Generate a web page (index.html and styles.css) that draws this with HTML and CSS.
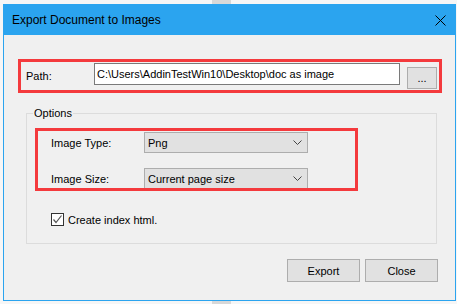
FILE: index.html
```html
<!DOCTYPE html>
<html lang="en">
<head>
  <meta charset="UTF-8">
  <title>Export Document to Images</title>
  <link rel="stylesheet" href="styles.css">
</head>
<body>
  <div class="desktop">
    <div class="window">
      <div class="titlebar">
        <span class="title">Export Document to Images</span>
        <svg class="close-icon" width="11" height="11" viewBox="0 0 11 11">
          <path d="M0.5 0.5 L10.5 10.5 M10.5 0.5 L0.5 10.5" stroke="#000" stroke-width="1" fill="none"/>
        </svg>
      </div>

      <div class="dialog-body">
        <div class="mark path-row">
          <span class="path-label">Path:</span>
          <div class="textbox">C:\Users\AddinTestWin10\Desktop\doc as image</div>
          <button class="btn browse-btn">...</button>
        </div>

        <fieldset class="options">
          <legend>Options</legend>
          <div class="mark combo-rows">
            <div class="combo-row">
              <span class="combo-label">Image Type:</span>
              <div class="combo">
                <span>Png</span>
                <svg width="9" height="5" viewBox="0 0 9 5"><path d="M0.5 0.5 L4.5 4.5 L8.5 0.5" stroke="#444" fill="none"/></svg>
              </div>
            </div>
            <div class="combo-row">
              <span class="combo-label">Image Size:</span>
              <div class="combo">
                <span>Current page size</span>
                <svg width="9" height="5" viewBox="0 0 9 5"><path d="M0.5 0.5 L4.5 4.5 L8.5 0.5" stroke="#444" fill="none"/></svg>
              </div>
            </div>
          </div>
          <label class="check-row">
            <span class="checkbox">
              <svg width="11" height="11" viewBox="0 0 11 11"><path d="M1.5 5.5 L4 8.5 L9.5 1.5" stroke="#555" stroke-width="1.2" fill="none"/></svg>
            </span>
            Create index html.
          </label>
        </fieldset>

        <div class="actions">
          <button class="btn action-btn">Export</button>
          <button class="btn action-btn">Close</button>
        </div>
      </div>
    </div>
  </div>
</body>
</html>
```

FILE: styles.css
```css
body {
  margin: 0;
  background: #f6f6f6;
  font-family: "Liberation Sans", Arial, sans-serif;
  font-size: 11px;
  color: #000;
}
.desktop {
  width: 457px;
  height: 304px;
  padding: 4px 0 0 3px;
  box-sizing: border-box;
  overflow: hidden;
  background: linear-gradient(to right, transparent 212px, #d8d8d8 212px, #d8d8d8 231px, transparent 231px);
}
.window {
  width: 453px;
  height: 297px;
  box-sizing: border-box;
  border: 1px solid #2ba4ef;
  background: #f0f0f0;
}
.titlebar {
  height: 30px;
  background: #2ba4ef;
  display: flex;
  align-items: center;
  justify-content: space-between;
  padding: 0 9px 0 8px;
}
.title {
  font-size: 12px;
}
.close-icon {
  margin-top: 1px;
}
.dialog-body {
  padding: 24px 13px 0 14px;
}
.mark {
  border: 3px solid #f43a3d;
}
.path-row {
  height: 28px;
  display: flex;
  align-items: flex-start;
  padding-left: 5px;
}
.path-label {
  width: 68px;
  align-self: center;
}
.textbox {
  width: 306px;
  height: 22px;
  box-sizing: border-box;
  margin-top: 1px;
  border: 1px solid #7a7a7a;
  background: #fff;
  padding-left: 2px;
  line-height: 20px;
  white-space: nowrap;
  overflow: hidden;
}
.btn {
  font-family: inherit;
  font-size: 11px;
  color: #000;
  background: #e1e1e1;
  border: 1px solid #adadad;
  padding: 0;
}
.browse-btn {
  width: 30px;
  height: 22px;
  margin: 5px 0 0 7px;
}
.options {
  width: 411px;
  box-sizing: border-box;
  margin: 13px 0 0 8px;
  border: 1px solid #dcdcdc;
  padding: 8px 0 17px 8px;
}
.options legend {
  padding: 0 1px;
  margin-left: -2px;
  line-height: 14px;
}
.combo-rows {
  height: 56px;
  width: 304px;
  overflow: hidden;
  padding: 1px 0 0 13px;
  display: flex;
  flex-direction: column;
  gap: 15px;
}
.combo-row {
  display: flex;
  align-items: center;
}
.combo-label {
  width: 93px;
}
.combo {
  width: 164px;
  height: 21px;
  box-sizing: border-box;
  background: #e1e1e1;
  border: 1px solid #adadad;
  display: flex;
  align-items: center;
  justify-content: space-between;
  padding: 0 5px 0 3px;
}
.check-row {
  display: flex;
  align-items: center;
  gap: 4px;
  margin: 22px 0 0 16px;
}
.checkbox {
  width: 13px;
  height: 13px;
  box-sizing: border-box;
  border: 1px solid #333;
  background: #fff;
  display: flex;
  align-items: center;
  justify-content: center;
}
.actions {
  display: flex;
  justify-content: flex-end;
  gap: 5px;
  margin-top: 15px;
  padding-right: 4px;
}
.action-btn {
  width: 73px;
  height: 23px;
}
```
